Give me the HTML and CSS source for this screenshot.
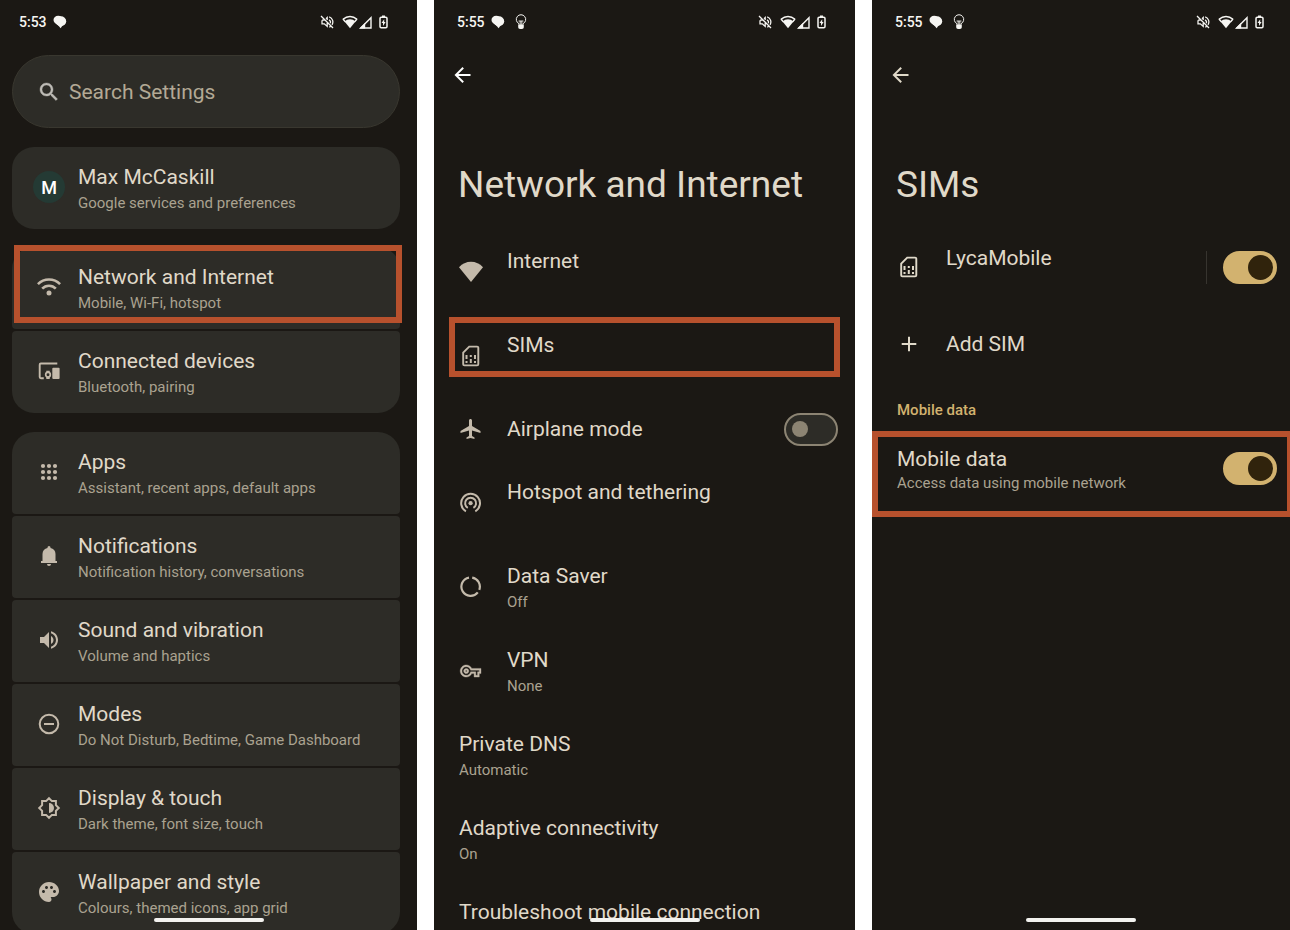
FILE: index.html
```html
<!DOCTYPE html>
<html lang="en">
<head>
<meta charset="utf-8">
<meta name="viewport" content="width=device-width, initial-scale=1">
<title>Mobile data settings</title>
<link rel="stylesheet" href="styles.css">
</head>
<body>
<svg class="sprite" aria-hidden="true">
  <symbol id="chat" viewBox="0 0 14 14"><ellipse cx="5.2" cy="5" rx="4.7" ry="4.2"/><ellipse cx="7.8" cy="6.2" rx="5.4" ry="4.9"/><path d="M4 9l3.6 4.2L10 10z"/></symbol>
  <symbol id="bulb" viewBox="0 0 12 16"><path d="M4 10.600V9.700A4.700 4.700 0 1 1 8 9.700v.9" fill="none" stroke="currentColor"/><path d="M3.600 7h4.800M5.200 7v4M6.800 7v4" fill="none" stroke="currentColor" stroke-width=".9"/><path d="M3.200 10.400h5.600v2.800A1.800 1.800 0 0 1 7 15H5a1.800 1.800 0 0 1-1.800-1.800z"/></symbol>
  <symbol id="mute" viewBox="0 0 14 14"><g fill="none" stroke="currentColor" stroke-width="1.3"><path d="M1 1l12 12M2 5.2v3.6h2.3l2.9 2.6V7.3M2 5.2h3.2M7.2 5V2.6L6 3.7M9 4.8a2.6 2.6 0 0 1 1.2 3.4M9.2 1.8a5.4 5.4 0 0 1 2.8 8M9.2 12.2l1.4-.7"/></g></symbol>
  <symbol id="signal-wifi" viewBox="0 0 16 14"><path d="M1 4.200Q4.200 1.400 8 1.400t7 2.800" fill="none" stroke="currentColor" stroke-width="1.500"/><path d="M.4 4.400l1.200-.9L4 6.600l-.9.900zM15.600 4.400l-1.200-.9L12 6.600l.9.900z"/><path d="M2.500 6.500Q4.900 4.200 8 4.200t5.500 2.300L8 13.200z"/></symbol>
  <symbol id="cell" viewBox="0 0 13 13"><path d="M12 1.700V12H1.700z" fill="none" stroke="currentColor" stroke-width="1.400"/><path d="M.4 12.600h5.800V6.700z"/></symbol>
  <symbol id="battery" viewBox="0 0 9 14"><rect x="1" y="2.200" width="7" height="10.600" rx="1.200" fill="none" stroke="currentColor" stroke-width="1.500"/><path d="M3 .5h3v1.500H3zM5.200 4.200L2.500 8h1.500v2.900L6.600 7H5.200z"/></symbol>
  <symbol id="search" viewBox="0 0 24 24"><path d="M15.5 14h-.79l-.28-.27C15.41 12.590 16 11.110 16 9.500 16 5.910 13.090 3 9.500 3S3 5.910 3 9.500 5.910 16 9.500 16c1.610 0 3.090-.59 4.230-1.570l.27.28v.79l5 4.990L20.490 19l-4.990-5zm-6 0C7.010 14 5 11.990 5 9.500S7.010 5 9.500 5 14 7.010 14 9.500 11.990 14 9.500 14z" stroke="currentColor" stroke-width=".4"/></symbol>
  <symbol id="wifi" viewBox="0 0 24 24"><g fill="none" stroke="currentColor" stroke-width="2.600"><path d="M.9 9.200a15.500 15.500 0 0 1 22.200 0M5.200 13.700a9.300 9.300 0 0 1 13.600 0"/></g><circle cx="12" cy="18" r="2.500"/></symbol>
  <symbol id="devices" viewBox="0 0 24 24"><path d="M20.300 4.500H3.900a1.200 1.200 0 0 0-1.200 1.200v12.400a1.200 1.200 0 0 0 1.200 1.200h2.900" fill="none" stroke="currentColor" stroke-width="1.900"/><circle cx="11" cy="15.700" r="2.300" fill="none" stroke="currentColor" stroke-width="1.700"/><path d="M9.300 11.700h3.400v2H9.300zM9.300 17.800h3.400v2.200H9.300z"/><rect x="15.300" y="8.700" width="7.300" height="11.300" rx="1"/></symbol>
  <symbol id="apps" viewBox="0 0 24 24"><circle cx="6" cy="6" r="2.100"/><circle cx="12" cy="6" r="2.100"/><circle cx="18" cy="6" r="2.100"/><circle cx="6" cy="12" r="2.100"/><circle cx="12" cy="12" r="2.100"/><circle cx="18" cy="12" r="2.100"/><circle cx="6" cy="18" r="2.100"/><circle cx="12" cy="18" r="2.100"/><circle cx="18" cy="18" r="2.100"/></symbol>
  <symbol id="bell" viewBox="0 0 24 24"><path d="M4 19v-2h1.500v-7c0-3 2-5.300 5-5.900v-.6a1.500 1.500 0 0 1 3 0v.6c3 .6 5 2.900 5 5.900v7H20v2zM12 22a2 2 0 0 1-2-2h4a2 2 0 0 1-2 2z"/></symbol>
  <symbol id="volume" viewBox="0 0 24 24"><path d="M3 9v6h4l5 5V4L7 9H3zm13.500 3c0-1.770-1.020-3.290-2.500-4.030v8.050c1.480-.73 2.500-2.250 2.500-4.020zM14 3.230v2.060c2.890.86 5 3.540 5 6.710s-2.110 5.850-5 6.710v2.060c4.010-.91 7-4.490 7-8.770s-2.990-7.860-7-8.770z"/></symbol>
  <symbol id="modes" viewBox="0 0 24 24"><circle cx="12" cy="12" r="9.300" fill="none" stroke="currentColor" stroke-width="2"/><path d="M7 11h10v2H7z"/></symbol>
  <symbol id="display" viewBox="0 0 24 24"><path d="M12 2.200l2.900 2.900h4v4l2.900 2.900-2.900 2.900v4h-4L12 21.800l-2.900-2.900h-4v-4L2.200 12l2.900-2.900v-4h4z" fill="none" stroke="currentColor" stroke-width="2"/><path d="M12 7a5 5 0 0 1 0 10z"/></symbol>
  <symbol id="palette" viewBox="0 0 24 24"><path d="M12 2C6.490 2 2 6.490 2 12s4.490 10 10 10c1.380 0 2.500-1.120 2.500-2.500 0-.61-.23-1.200-.64-1.670-.08-.1-.13-.21-.13-.33 0-.28.22-.5.5-.5H16c3.310 0 6-2.690 6-6 0-4.960-4.490-9-10-9zm-5.500 11c-.83 0-1.500-.67-1.500-1.500S5.670 10 6.500 10s1.500.67 1.500 1.500S7.330 13 6.500 13zm3-4C8.670 9 8 8.330 8 7.500S8.670 6 9.500 6s1.500.67 1.500 1.500S10.330 9 9.500 9zm5 0c-.83 0-1.500-.67-1.500-1.500S13.670 6 14.500 6s1.500.67 1.500 1.500S15.330 9 14.500 9zm3 4c-.83 0-1.500-.67-1.500-1.500s.67-1.500 1.500-1.500 1.500.67 1.500 1.500-.67 1.500-1.500 1.500z"/></symbol>
  <symbol id="internet" viewBox="0 0 24 24"><path d="M12 22L0 7.200Q5 1.700 12 1.700t12 5.500z"/></symbol>
  <symbol id="sim" viewBox="0 0 24 24"><path d="M10.200 2.600h7.900a1.200 1.200 0 0 1 1.200 1.200v16.400a1.200 1.200 0 0 1-1.200 1.200H5.400a1.200 1.200 0 0 1-1.200-1.200V8.700z" fill="none" stroke="currentColor" stroke-width="1.900"/><path d="M6.500 11h2v4h-2zM10.800 11h2v2h-2zM15 11h2v4h-2zM6.500 17h2v2h-2zM10.800 15h2v4h-2zM15 17h2v2h-2z"/></symbol>
  <symbol id="plane" viewBox="0 0 24 24"><path d="M21.500 16v-2L13 9V3.500C13 2.670 12.330 2 11.500 2S10 2.670 10 3.500V9l-8.500 5v2l8.500-2.500V19l-2.500 1.500V22l4-1 4 1v-1.500L13 19v-5.500z"/></symbol>
  <symbol id="hotspot" viewBox="0 0 24 24"><g fill="none" stroke="currentColor" stroke-width="2"><path d="M6.900 20.300a9.400 9.400 0 1 1 9.400 0"/><path d="M8.800 16.900a5.500 5.500 0 1 1 5.600 0"/></g><circle cx="11.600" cy="12.200" r="2.100"/></symbol>
  <symbol id="saver" viewBox="0 0 24 24"><path d="M13.200 2.600a9.200 9.200 0 0 1 7.100 12.200M18.800 17.400A9.200 9.200 0 1 1 10 2.600" fill="none" stroke="currentColor" stroke-width="2.200"/></symbol>
  <symbol id="key" viewBox="0 0 24 24"><g transform="translate(1.200 1.600) scale(.867)"><path stroke="currentColor" stroke-width=".4" d="M22 19h-6v-4h-2.680c-1.140 2.420-3.600 4-6.320 4-3.860 0-7-3.140-7-7s3.140-7 7-7c2.720 0 5.170 1.580 6.320 4H24v6h-2v4zm-4-2h2v-4h2v-2H11.940l-.23-.67C11.010 8.340 9.110 7 7 7c-2.760 0-5 2.240-5 5s2.240 5 5 5c2.110 0 4.010-1.340 4.710-3.330l.23-.67H18v4zM7 15c-1.650 0-3-1.350-3-3s1.350-3 3-3 3 1.350 3 3-1.350 3-3 3zm0-4c-.55 0-1 .45-1 1s.45 1 1 1 1-.45 1-1-.45-1-1-1z"/></g></symbol>
  <symbol id="back" viewBox="0 0 24 24"><path d="M20.500 11H8.300l5.600-5.600L12.500 4l-8 8 8 8 1.400-1.400L8.300 13h12.200z"/></symbol>
  <symbol id="plus" viewBox="0 0 24 24"><path d="M11 4.700h2V11h6.300v2H13v6.300h-2V13H4.700v-2H11z"/></symbol>
</svg>

<main class="screens">
  <section class="screen screen-settings" aria-label="Settings">
    <div class="status">
      <time class="clock">5:53</time>
      <svg class="s-chat"><use href="#chat"/></svg>
      <div class="status-end"><svg class="s-mute"><use href="#mute"/></svg><svg class="s-wifi"><use href="#signal-wifi"/></svg><svg class="s-cell"><use href="#cell"/></svg><svg class="s-battery"><use href="#battery"/></svg></div>
    </div>
    <label class="search"><svg class="icon"><use href="#search"/></svg><input type="search" placeholder="Search Settings" aria-label="Search Settings"></label>
    <nav class="cards">
      <div class="group">
        <a class="card" href="#"><span class="avatar">M</span><span class="text"><span class="name">Max McCaskill</span><span class="sub">Google services and preferences</span></span></a>
      </div>
      <div class="group">
        <a class="card marked marked-network" href="#"><span class="cell"><svg class="icon"><use href="#wifi"/></svg></span><span class="text"><span class="name">Network and Internet</span><span class="sub">Mobile, Wi-Fi, hotspot</span></span></a>
        <a class="card" href="#"><span class="cell"><svg class="icon"><use href="#devices"/></svg></span><span class="text"><span class="name">Connected devices</span><span class="sub">Bluetooth, pairing</span></span></a>
      </div>
      <div class="group">
        <a class="card" href="#"><span class="cell"><svg class="icon"><use href="#apps"/></svg></span><span class="text"><span class="name">Apps</span><span class="sub">Assistant, recent apps, default apps</span></span></a>
        <a class="card" href="#"><span class="cell"><svg class="icon"><use href="#bell"/></svg></span><span class="text"><span class="name">Notifications</span><span class="sub">Notification history, conversations</span></span></a>
        <a class="card" href="#"><span class="cell"><svg class="icon"><use href="#volume"/></svg></span><span class="text"><span class="name">Sound and vibration</span><span class="sub">Volume and haptics</span></span></a>
        <a class="card" href="#"><span class="cell"><svg class="icon"><use href="#modes"/></svg></span><span class="text"><span class="name">Modes</span><span class="sub">Do Not Disturb, Bedtime, Game Dashboard</span></span></a>
        <a class="card" href="#"><span class="cell"><svg class="icon"><use href="#display"/></svg></span><span class="text"><span class="name">Display &amp; touch</span><span class="sub">Dark theme, font size, touch</span></span></a>
        <a class="card" href="#"><span class="cell"><svg class="icon"><use href="#palette"/></svg></span><span class="text"><span class="name">Wallpaper and style</span><span class="sub">Colours, themed icons, app grid</span></span></a>
      </div>
    </nav>
    <div class="home-bar"></div>
  </section>

  <section class="screen" aria-label="Network and Internet">
    <div class="status">
      <time class="clock">5:55</time>
      <svg class="s-chat"><use href="#chat"/></svg><svg class="s-bulb"><use href="#bulb"/></svg>
      <div class="status-end"><svg class="s-mute"><use href="#mute"/></svg><svg class="s-wifi"><use href="#signal-wifi"/></svg><svg class="s-cell"><use href="#cell"/></svg><svg class="s-battery"><use href="#battery"/></svg></div>
    </div>
    <header class="header">
      <button class="back back-bright" type="button" aria-label="Back"><svg class="icon"><use href="#back"/></svg></button>
      <h1>Network and Internet</h1>
    </header>
    <nav class="rows">
      <a class="row" href="#"><svg class="icon"><use href="#internet"/></svg><span class="text"><span class="name">Internet</span></span></a>
      <a class="row marked marked-sims" href="#"><svg class="icon"><use href="#sim"/></svg><span class="text"><span class="name">SIMs</span></span></a>
      <label class="row row-single"><svg class="icon"><use href="#plane"/></svg><span class="text"><span class="name">Airplane mode</span></span><input class="switch" type="checkbox" role="switch"></label>
      <a class="row" href="#"><svg class="icon"><use href="#hotspot"/></svg><span class="text"><span class="name">Hotspot and tethering</span></span></a>
      <a class="row" href="#"><svg class="icon"><use href="#saver"/></svg><span class="text"><span class="name">Data Saver</span><span class="sub">Off</span></span></a>
      <a class="row" href="#"><svg class="icon"><use href="#key"/></svg><span class="text"><span class="name">VPN</span><span class="sub">None</span></span></a>
      <a class="row" href="#"><span class="text"><span class="name">Private DNS</span><span class="sub">Automatic</span></span></a>
      <a class="row" href="#"><span class="text"><span class="name">Adaptive connectivity</span><span class="sub">On</span></span></a>
      <a class="row" href="#"><span class="text"><span class="name">Troubleshoot mobile connection</span></span></a>
    </nav>
    <div class="home-bar"></div>
  </section>

  <section class="screen screen-sims" aria-label="SIMs">
    <div class="status">
      <time class="clock">5:55</time>
      <svg class="s-chat"><use href="#chat"/></svg><svg class="s-bulb"><use href="#bulb"/></svg>
      <div class="status-end"><svg class="s-mute"><use href="#mute"/></svg><svg class="s-wifi"><use href="#signal-wifi"/></svg><svg class="s-cell"><use href="#cell"/></svg><svg class="s-battery"><use href="#battery"/></svg></div>
    </div>
    <header class="header">
      <button class="back" type="button" aria-label="Back"><svg class="icon"><use href="#back"/></svg></button>
      <h1>SIMs</h1>
    </header>
    <div class="rows">
      <label class="row row-carrier"><svg class="icon"><use href="#sim"/></svg><span class="text"><span class="name">LycaMobile</span></span><span class="divider"></span><input class="switch" type="checkbox" role="switch" checked></label>
      <a class="row row-add" href="#"><svg class="icon"><use href="#plus"/></svg><span class="text"><span class="name">Add SIM</span></span></a>
      <h2>Mobile data</h2>
      <label class="row row-data marked marked-data"><span class="text"><span class="name">Mobile data</span><span class="sub">Access data using mobile network</span></span><input class="switch" type="checkbox" role="switch" checked></label>
    </div>
    <div class="home-bar"></div>
  </section>
</main>
</body>
</html>
```
FILE: styles.css
```css
:root {
  --bg: #1b1814;
  --card: #2d2c27;
  --text: #e0d9c9;
  --muted: #aaa290;
  --icon: #c4baab;
  --accent: #d2b26f;
  --mark: #b7512d;
}

* { box-sizing: border-box; }

body {
  margin: 0;
  background: #fff;
  color: var(--text);
  font-family: Roboto, "Liberation Sans", sans-serif;
}

a { color: inherit; text-decoration: none; }

.sprite { position: absolute; width: 0; height: 0; }

svg { display: block; flex: none; fill: currentColor; }

.icon { width: 24px; height: 24px; color: var(--icon); }

.screens {
  display: grid;
  grid-template-columns: 417fr 421fr 418fr;
  column-gap: 17px;
  height: 100vh;
}

.screen {
  position: relative;
  min-width: 0;
  overflow: hidden;
  background: var(--bg);
}

/* Status bar */
.status {
  display: flex;
  align-items: center;
  height: 44px;
  padding: 0 29px 0 23px;
  color: #f6f5f2;
}

.clock { font-size: 14px; font-weight: 500; line-height: 20px; width: 34px; }
.s-chat { width: 14px; height: 14px; }
.s-bulb { width: 12px; height: 16px; margin-left: 10px; }
.status-end { display: flex; align-items: center; margin-left: auto; }
.s-mute { width: 14px; height: 14px; margin-right: 8px; }
.s-wifi { width: 16px; height: 14px; margin-right: 1px; }
.s-cell { width: 13px; height: 13px; margin-right: 7px; }
.s-battery { width: 9px; height: 14px; }

/* Settings list */
.screen-settings { padding: 0 17px 0 12px; }
.screen-settings .status { padding: 0 12px 0 7px; }

.search {
  display: flex;
  align-items: center;
  gap: 8px;
  height: 73px;
  margin-top: 11px;
  padding: 0 24px;
  border: 1px solid #39372f;
  border-radius: 37px;
  background: var(--card);
}

.search .icon { color: #bdbbb5; }

.search input {
  flex: 1;
  min-width: 0;
  padding: 0;
  border: 0;
  outline: 0;
  background: none;
  color: var(--text);
  font: inherit;
  font-size: 21px;
}

.search input::placeholder { color: #b3a995; opacity: 1; }

.cards { display: grid; gap: 18px; margin-top: 19px; }
.group { display: grid; gap: 2px; }

.card {
  display: flex;
  align-items: center;
  gap: 13px;
  min-height: 82px;
  padding: 0 21px 2px;
  border-radius: 4px;
  background: var(--card);
}

.card .text { padding-top: 5px; }
.card:first-child { border-top-left-radius: 22px; border-top-right-radius: 22px; }
.card:last-child { border-bottom-left-radius: 22px; border-bottom-right-radius: 22px; }
.group:last-child { margin-top: 1px; }

.cell { display: grid; place-items: center; width: 32px; }

.avatar {
  display: grid;
  place-items: center;
  width: 32px;
  height: 32px;
  border-radius: 50%;
  background: #243a34;
  color: #fff;
  font-size: 18px;
  font-weight: 500;
}

.text { display: flex; flex: 1; flex-direction: column; min-width: 0; }
.name { font-size: 21px; line-height: 26px; }
.sub { color: var(--muted); font-size: 15px; line-height: 26px; }

/* Detail screens */
.header { padding: 19px 25px 0 16px; }

.back {
  display: block;
  padding: 0;
  border: 0;
  background: none;
}

.back .icon { color: var(--text); }
.back-bright .icon { color: #fff; }

h1 {
  margin: 75px 0 23px 8px;
  font-size: 37px;
  font-weight: 400;
  line-height: 46px;
}

h2 {
  margin: 0;
  padding: 15px 25px 0;
  height: 50px;
  color: var(--accent);
  font-size: 15px;
  font-weight: 500;
  line-height: 20px;
}

.row {
  display: flex;
  align-items: flex-start;
  gap: 24px;
  min-height: 84px;
  padding: 17px 17px 0 25px;
}

.row > .icon { margin-top: 12px; }

.row-single { align-items: center; min-height: 63px; padding-top: 0; padding-bottom: 3px; }
.row-single > .icon { margin-top: 0; }

.screen-sims .status { padding-right: 26px; }
.screen-sims .row { padding-right: 13px; }
.screen-sims .icon { color: var(--text); }

.row-carrier { align-items: center; gap: 16px; min-height: 72px; padding-top: 0; }
.row-carrier > .icon,
.row-add > .icon { margin: 0; }
.row-carrier .text { padding: 0 0 18px 9px; }

.row-add { align-items: center; gap: 25px; min-height: 82px; padding-top: 0; }

.row-data { align-items: center; min-height: 67px; padding-top: 0; }
.row-data .text { padding-top: 2px; }
.row-data .sub { line-height: 22px; }

.divider { width: 1px; height: 33px; background: #37342f; }

/* Switch */
.switch {
  flex: none;
  display: flex;
  align-items: center;
  appearance: none;
  width: 54px;
  height: 33px;
  margin: 0;
  padding: 0 6px;
  border: 2px solid #8c8473;
  border-radius: 17px;
  background: var(--card);
}

.switch::before {
  content: "";
  width: 16px;
  height: 16px;
  border-radius: 50%;
  background: #8c8473;
}

.switch:checked {
  justify-content: flex-end;
  padding: 0 2px;
  border-color: var(--accent);
  background: var(--accent);
}

.switch:checked::before { width: 25px; height: 25px; background: #30230c; }

/* Callout frames drawn over the list */
.marked { position: relative; }

.marked::after {
  content: "";
  position: absolute;
  border: 6px solid var(--mark);
  pointer-events: none;
}

.marked-network::after { inset: -2px -2px 6px 2px; }
.marked-sims::after { inset: 2px 15px 22px 15px; }
.marked-data::after { inset: -4px -3px -15px 0; }

.home-bar {
  position: absolute;
  bottom: 8px;
  left: 50%;
  width: 110px;
  height: 4px;
  margin-left: -55px;
  border-radius: 2px;
  background: #f3f2ef;
}
```
